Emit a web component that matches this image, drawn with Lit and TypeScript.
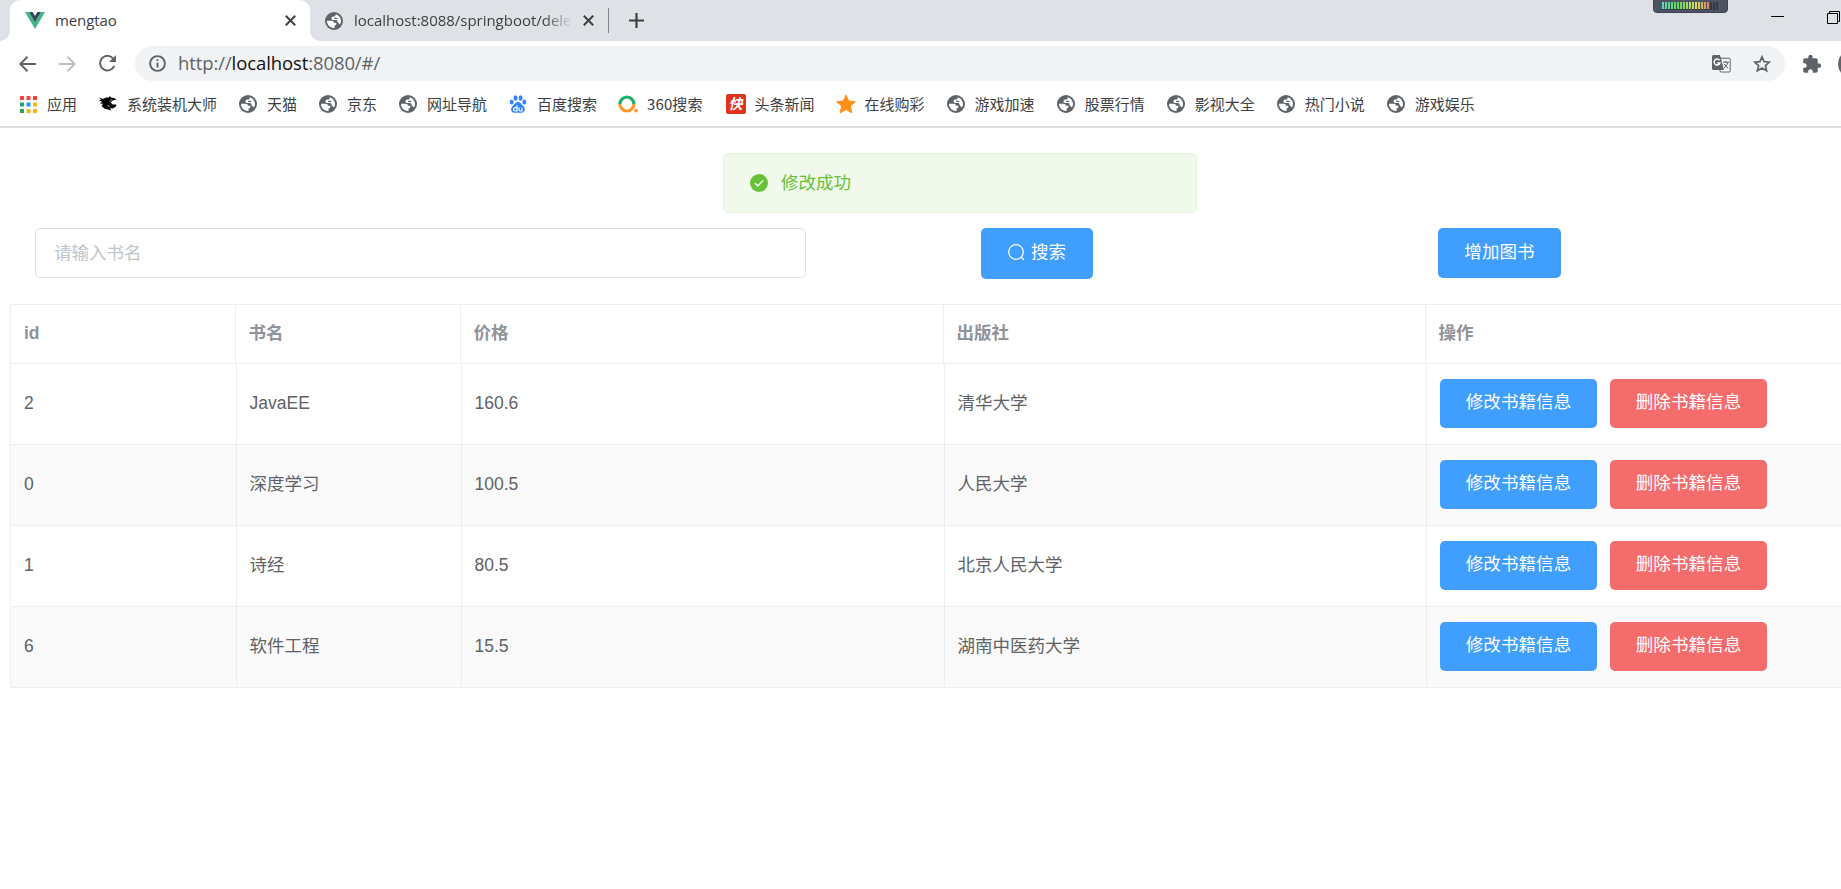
import { LitElement, html, css, svg } from "lit";
import { customElement } from "lit/decorators.js";

const globe = html`<svg width="18" height="18" viewBox="0 0 18 18"><circle cx="9" cy="9" r="9" fill="#5f6368"/>
<path fill="#fff" d="M2 8.8H6.8C8.2 8.8 8.9 9.6 8.9 10.8H11.3V12.2C11.3 13 10.6 13.3 9.6 13.4V15.9C5.3 16.3 1.9 13 2 8.8Z"/><path fill="#fff" d="M10.8 2.2C13.8 3 16 5.7 16 9C16 10.3 15.600 11.500 15 12.500L12.800 10.500C12.300 9.200 12.500 8.400 11.300 8.100H8.500C7.200 8.100 6.500 7.200 6.500 6.200C6.500 5 7.300 4.600 8.200 4.500H9.900C10.700 4.100 10.300 3 10.800 2.200Z"/><path fill="#5f6368" d="M9.500 5.800H11.200C12 5.800 12.500 6.400 12.500 7.100H9.500C8.700 7 8.700 6 9.500 5.800Z"/></svg>`;

const apps = html`<svg width="17" height="17" viewBox="0 0 17 17">${[
  [0, 0, "#f4433c"], [6.5, 0, "#f4433c"], [13, 0, "#f4433c"],
  [0, 6.5, "#23a566"], [6.5, 6.5, "#1e96fa"], [13, 6.5, "#fbb40c"],
  [0, 13, "#23a566"], [6.5, 13, "#fbb40c"], [13, 13, "#fbb40c"],
].map(([x, y, c]) => svg`<rect x=${x} y=${y} width="4" height="4" fill=${c}/>`)}</svg>`;

const shark = html`<svg width="20" height="18" viewBox="0 0 20 18"><path fill="#000" d="M1 2.5L5 4C7 2.6 8.500 2.300 10.500 2.400L12 1L12.800 2.400C15 2.600 17 3 18.800 4.600L14.600 5.600L12.800 7.200L14.500 9.500L18.500 9.600L17.500 12L14.500 13.500L12 12.900L13.200 15.600L9.500 14.200C7 14 4.600 12.600 3.700 10.400L5.200 8.800L2 8.500L4.200 6.800L1 5.800L3 4.800Z"/><path stroke="#fff" stroke-width=".7" fill="none" d="M11.500 6.800L13.800 4.600M9.500 10.400L11.600 11.600"/></svg>`;

const baidu = html`<svg width="18" height="18" viewBox="0 0 18 18"><g fill="#3385ff"><ellipse cx="2.6" cy="7" rx="2" ry="2.5"/><ellipse cx="6.5" cy="3" rx="2" ry="2.7"/><ellipse cx="11.6" cy="3" rx="2" ry="2.7"/><ellipse cx="15.3" cy="7.1" rx="2" ry="2.5"/><path d="M9 7.1C11.4 7.1 12 9.2 14.4 11C16.7 13 16.2 17.7 12.8 17.7H5.2C1.8 17.7 1.2 13.2 3.6 11C6 9.2 6.6 7.1 9 7.1Z"/></g><path fill="none" stroke="#fff" stroke-width="1.2" d="M8 10.2V16H6.3C4 16 4 12.7 6.3 12.7H8M10 12.5V14.8C10 15.7 10.4 16 11.2 16H13V12.5"/></svg>`;

const so360 = html`<svg width="20" height="18" viewBox="0 0 20 18"><path d="M1.9 9A7 7 0 0 1 15.9 9" fill="none" stroke="#19b26b" stroke-width="3.2"/><path d="M1.9 9A7 7 0 0 0 15.9 9" fill="none" stroke="#fd9a2b" stroke-width="3.2"/><circle cx="18" cy="15.6" r="1.9" fill="#fd9a2b"/></svg>`;

const star = html`<svg width="20" height="20" viewBox="0 0 20 20"><path fill="#ff9118" stroke="#ff9118" stroke-linejoin="round" d="M10 1L12.7 7L19.3 7.7L14.4 12L15.8 18.8L10 15.5L4.2 18.8L5.6 12L.7 7.7L7.3 7Z"/></svg>`;

const kuai = html`<span class="kuai">快</span>`;

const bookmarks: [unknown, string][] = [
  [apps, "应用"], [shark, "系统装机大师"], [globe, "天猫"], [globe, "京东"], [globe, "网址导航"],
  [baidu, "百度搜索"], [so360, "360搜索"], [kuai, "头条新闻"], [star, "在线购彩"], [globe, "游戏加速"],
  [globe, "股票行情"], [globe, "影视大全"], [globe, "热门小说"], [globe, "游戏娱乐"],
];

const close = html`<svg width="11" height="11" viewBox="0 0 11 11"><path d="M.8 .8L10.2 10.2M10.2 .8L.8 10.2" stroke="#3c4043" stroke-width="2" fill="none"/></svg>`;

@customElement("browser-chrome")
class BrowserChrome extends LitElement {
  static styles = css`
    :host { display: block; height: 128px; position: relative; overflow: hidden; color: #3c4043;
      font-family: "Open Sans", "Noto Sans CJK SC", sans-serif; font-weight: 400; }
    svg { display: block; flex: none; }
    .strip { display: flex; height: 41px; background: #dee1e6; box-sizing: border-box; padding-left: 10px; }
    .tab { display: flex; align-items: center; height: 41px; box-sizing: border-box; font-size: 15px; white-space: nowrap; }
    .active { width: 300px; background: #fff; border-radius: 10px 10px 0 0; padding: 0 14px 0 15px; position: relative; }
    .active::before, .active::after { content: ""; position: absolute; bottom: 0; width: 10px; height: 10px; }
    .active::before { left: -10px; background: radial-gradient(circle at 0 0, #dee1e6 9.5px, #fff 10px); }
    .active::after { right: -10px; background: radial-gradient(circle at 100% 0, #dee1e6 9.5px, #fff 10px); }
    .label { padding-bottom: 1px; }
    .active .label { margin-left: 10px; flex: 1; letter-spacing: -.1px; }
    .second { width: 298px; padding-left: 15px; }
    .second .label { margin-left: 11px; width: 217px; overflow: hidden; letter-spacing: -.02px;
      -webkit-mask-image: linear-gradient(90deg, #000 190px, transparent 219px); mask-image: linear-gradient(90deg, #000 190px, transparent 219px); }
    .second .x { margin-left: 12px; }
    .sep { width: 1px; height: 25px; background: #80868b; margin-top: 8px; }
    .plus { margin: 13px 0 0 20px; }
    .spring { flex: 1; }
    .min { width: 13px; height: 1px; background: #000; margin: 16px 43px 0 0; }
    .restore { margin: 11px 1px 0 0; }
    .meter { position: absolute; left: 1653px; top: -6px; width: 75px; height: 19px; box-sizing: border-box; padding: 7px 8px 4px; border: 1px solid #3d4150;
      border-radius: 4px; background: #4e5363; display: flex; gap: 1px; }
    .bar { width: 2px; height: 7px; flex: none; border-bottom: 1px solid #2e3340; }
    .tools { height: 45px; display: flex; align-items: center; box-sizing: border-box; padding-left: 19px; }
    .back { margin-right: 23px; } .fwd { margin-right: 23px; }
    .omni { width: 1650px; height: 35px; border-radius: 18px; background: #f1f3f4; margin-left: 19px; box-sizing: border-box;
      padding: 0 14px; display: flex; align-items: center; flex: none; }
    .url { margin-left: 12px; flex: 1; font-size: 18.5px; color: #5f6368; letter-spacing: -.1px; line-height: 32px; padding-bottom: 2px; }
    .url b { font-weight: 400; color: #111; }
    .trans { margin-right: 22px; }
    .puzzle { margin-left: 18px; }
    .avatar { width: 28px; height: 28px; border-radius: 50%; background: #5f6368; margin-left: 17px; flex: none; }
    .marks { height: 40px; display: flex; align-items: center; gap: 20px; padding: 0 0 4px 18px; box-sizing: border-box; }
    .mark { display: flex; align-items: center; gap: 9px; font: 400 15px/20px "Noto Sans CJK SC", sans-serif; color: #3c4043; white-space: nowrap; }
    .name { padding-right: 1px; }
    .mark:nth-child(7) { margin-right: 2px; }
    .mark:nth-child(7) .name { letter-spacing: .1px; }
    .ico { width: 20px; height: 20px; display: flex; align-items: center; justify-content: center; }
    .kuai { width: 20px; height: 20px; border-radius: 2px; background: #e2321c; color: #fff; font: italic 700 14px/19px "Noto Sans CJK SC", sans-serif; text-align: center; }
    .line { height: 2px; background: #dadce0; }
  `;
  render() {
    return html`
      <div class="strip">
        <div class="tab active">
          <svg width="20" height="17" viewBox="0 0 20 17"><path fill="#41b883" d="M0 0H4L10 10.2L16 0H20L10 17Z"/><path fill="#35495e" d="M4 0H7.6L10 4.1L12.4 0H16L10 10.2Z"/></svg>
          <span class="label">mengtao</span>${close}
        </div>
        <div class="tab second">${globe}<span class="label">localhost:8088/springboot/dele</span><span class="x">${close}</span></div>
        <div class="sep"></div>
        <svg class="plus" width="15" height="15" viewBox="0 0 15 15"><path d="M7.5 0V15M0 7.5H15" stroke="#3c4043" stroke-width="2.2"/></svg>
        <div class="spring"></div>
        <div class="min"></div>
        <svg class="restore" width="13" height="13" viewBox="0 0 13 13"><path d="M.5 2.5H10.5V12.5H.5ZM2.5 2.5V.5H12.5V10.5H10.5" fill="none" stroke="#000"/></svg>
      </div>
      <div class="meter">${Array.from({ length: 19 }, (_, i) => html`<span class="bar" style="background:${i > 15 ? "#343946" : `hsl(${165 - i * 9.5} 65% 60%)`}"></span>`)}</div>
      <div class="tools">
        <svg class="back" width="17" height="16" viewBox="0 0 17 16"><path d="M17 8H1.5M8.5 .8L1.3 8L8.5 15.2" fill="none" stroke="#5f6368" stroke-width="2"/></svg>
        <svg class="fwd" width="17" height="16" viewBox="0 0 17 16"><path d="M0 8H15.5M8.5 .8L15.7 8L8.5 15.2" fill="none" stroke="#bdc1c6" stroke-width="2"/></svg>
        <svg width="17" height="17" viewBox="0 0 17 17"><path d="M15.2 11A7.3 7.3 0 1 1 14 3.4" fill="none" stroke="#5f6368" stroke-width="2"/><path d="M17 0V7H10Z" fill="#5f6368"/></svg>
        <div class="omni">
          <svg width="17" height="17" viewBox="0 0 17 17"><circle cx="8.5" cy="8.5" r="7.4" fill="none" stroke="#5f6368" stroke-width="1.9"/><path d="M8.5 7.5V12.6M8.5 4.2V6" stroke="#5f6368" stroke-width="1.9"/></svg>
          <span class="url">http://<b>localhost</b>:8080/#/</span>
          <svg class="trans" width="19" height="18" viewBox="0 0 19 18"><rect x="8" y="3.2" width="10.2" height="13.8" rx="1" fill="#f8f9fa" stroke="#5f6368"/><path d="M1.5 0H8L12 15H1.5Q0 15 0 13.5V1.5Q0 0 1.5 0Z" fill="#5f6368"/><path d="M7.6 5.2A3 3 0 1 0 8 8H5.4" fill="none" stroke="#fff" stroke-width="1.5"/><path d="M11 7.3H17M14 5.8V7.3M16 7.5Q15 11 12 13M12.3 9Q14 12 16.3 13.2" stroke="#5f6368" fill="none"/></svg>
          <svg width="18" height="18" viewBox="0 0 18 18"><path d="M9 1.8L11.1 6.6L16.4 7.1L12.4 10.6L13.6 15.8L9 13L4.4 15.8L5.6 10.6L1.6 7.1L6.9 6.6Z" fill="none" stroke="#5f6368" stroke-width="1.7"/></svg>
        </div>
        <svg class="puzzle" width="18" height="18" viewBox="1.8 1.2 21 21"><path fill="#5f6368" d="M20.5 11H19V7c0-1.1-.9-2-2-2h-4V3.5C13 2.12 11.88 1 10.500 1S8 2.120 8 3.500V5H4c-1.100 0-1.990.9-1.990 2v3.800H3.500c1.490 0 2.700 1.210 2.700 2.700s-1.210 2.700-2.700 2.700H2V20c0 1.100.9 2 2 2h3.800v-1.500c0-1.490 1.210-2.700 2.700-2.700 1.490 0 2.700 1.210 2.700 2.700V22H17c1.100 0 2-.9 2-2v-4h1.500c1.380 0 2.500-1.120 2.500-2.500S21.880 11 20.500 11z"/></svg>
        <div class="avatar"></div>
      </div>
      <div class="marks">${bookmarks.map(([icon, text]) => html`<div class="mark"><span class="ico">${icon}</span><span class="name">${text}</span></div>`)}</div>
      <div class="line"></div>`;
  }
}

const columns = ["id", "书名", "价格", "出版社", "操作"];
const books = [
  ["2", "JavaEE", "160.6", "清华大学"],
  ["0", "深度学习", "100.5", "人民大学"],
  ["1", "诗经", "80.5", "北京人民大学"],
  ["6", "软件工程", "15.5", "湖南中医药大学"],
];

@customElement("app-root")
class AppRoot extends LitElement {
  static styles = css`
    :host { display: block; width: 100vw; height: 100vh; overflow: hidden; background: #fff; position: relative;
      font: 400 17.5px/24px "Liberation Sans", "Noto Sans CJK SC", sans-serif; color: #606266; }
    .message { position: absolute; left: 723px; top: 153px; width: 474px; height: 60px; box-sizing: border-box; display: flex; align-items: center;
      background: #f0f9eb; border: 1px solid #e1f3d8; border-radius: 5px; padding: 0 0 1px 26px; gap: 13px; color: #67c23a; }
    .form { display: flex; align-items: flex-start; padding: 100px 0 0 35px; }
    .input { width: 771px; height: 50px; box-sizing: border-box; border: 1px solid #dcdfe6; border-radius: 5px; padding: 12px 18px; color: #c0c4cc; }
    .btn { box-sizing: border-box; height: 49px; width: 157px; border-radius: 5px; background: #409eff; color: #fff; display: flex; align-items: center;
      justify-content: center; padding-bottom: 3px; white-space: nowrap; letter-spacing: .1px; }
    .search { width: 112px; height: 51px; margin-left: 175px; gap: 6px; }
    .add { width: 123px; height: 50px; margin-left: 345px; }
    .danger { background: #f56c6c; }
    .table { margin: 25px 0 0 10px; width: 1920px; border: 1px solid #ebeef5; border-right: 0; border-bottom: 0; box-sizing: border-box; }
    .row { display: grid; grid-template-columns: 226px 225px 483px 482px 1fr; height: 81px; }
    .head { grid-template-columns: 225px 225px 483px 482px 1fr; height: 59px; font-weight: 700; color: #909399; }
    .striped { background: #fafafa; }
    .cell { box-sizing: border-box; border-right: 1px solid #ebeef5; border-bottom: 1px solid #ebeef5; padding: 0 13px 2px; display: flex; align-items: center; gap: 13px; }
    .cell:nth-child(n+2) { padding-left: 12.5px; }
    .cell.ops { padding: 15px 13px 0; align-items: flex-start; }
  `;
  render() {
    return html`
      <browser-chrome></browser-chrome>
      <div class="form">
        <div class="input">请输入书名</div>
        <div class="btn search"><svg width="17" height="17" viewBox="0 0 17 17"><circle cx="8" cy="8" r="7.3" fill="none" stroke="#fff" stroke-width="1.2"/><path d="M13 13L16 16" stroke="#fff" stroke-width="1.3"/></svg>搜索</div>
        <div class="btn add">增加图书</div>
      </div>
      <div class="table">
        <div class="row head">${columns.map((c) => html`<div class="cell">${c}</div>`)}</div>
        ${books.map((b, i) => html`<div class="row ${i % 2 ? "striped" : ""}">${b.map((v) => html`<div class="cell">${v}</div>`)}
          <div class="cell ops"><div class="btn">修改书籍信息</div><div class="btn danger">删除书籍信息</div></div></div>`)}
      </div>
      <div class="message">
        <svg width="18" height="18" viewBox="0 0 18 18"><circle cx="9" cy="9" r="9" fill="#67c23a"/><path d="M5 9.2L7.8 11.8L13.3 6.4" fill="none" stroke="#fff" stroke-width="1.3"/></svg>
        <span>修改成功</span>
      </div>`;
  }
}
